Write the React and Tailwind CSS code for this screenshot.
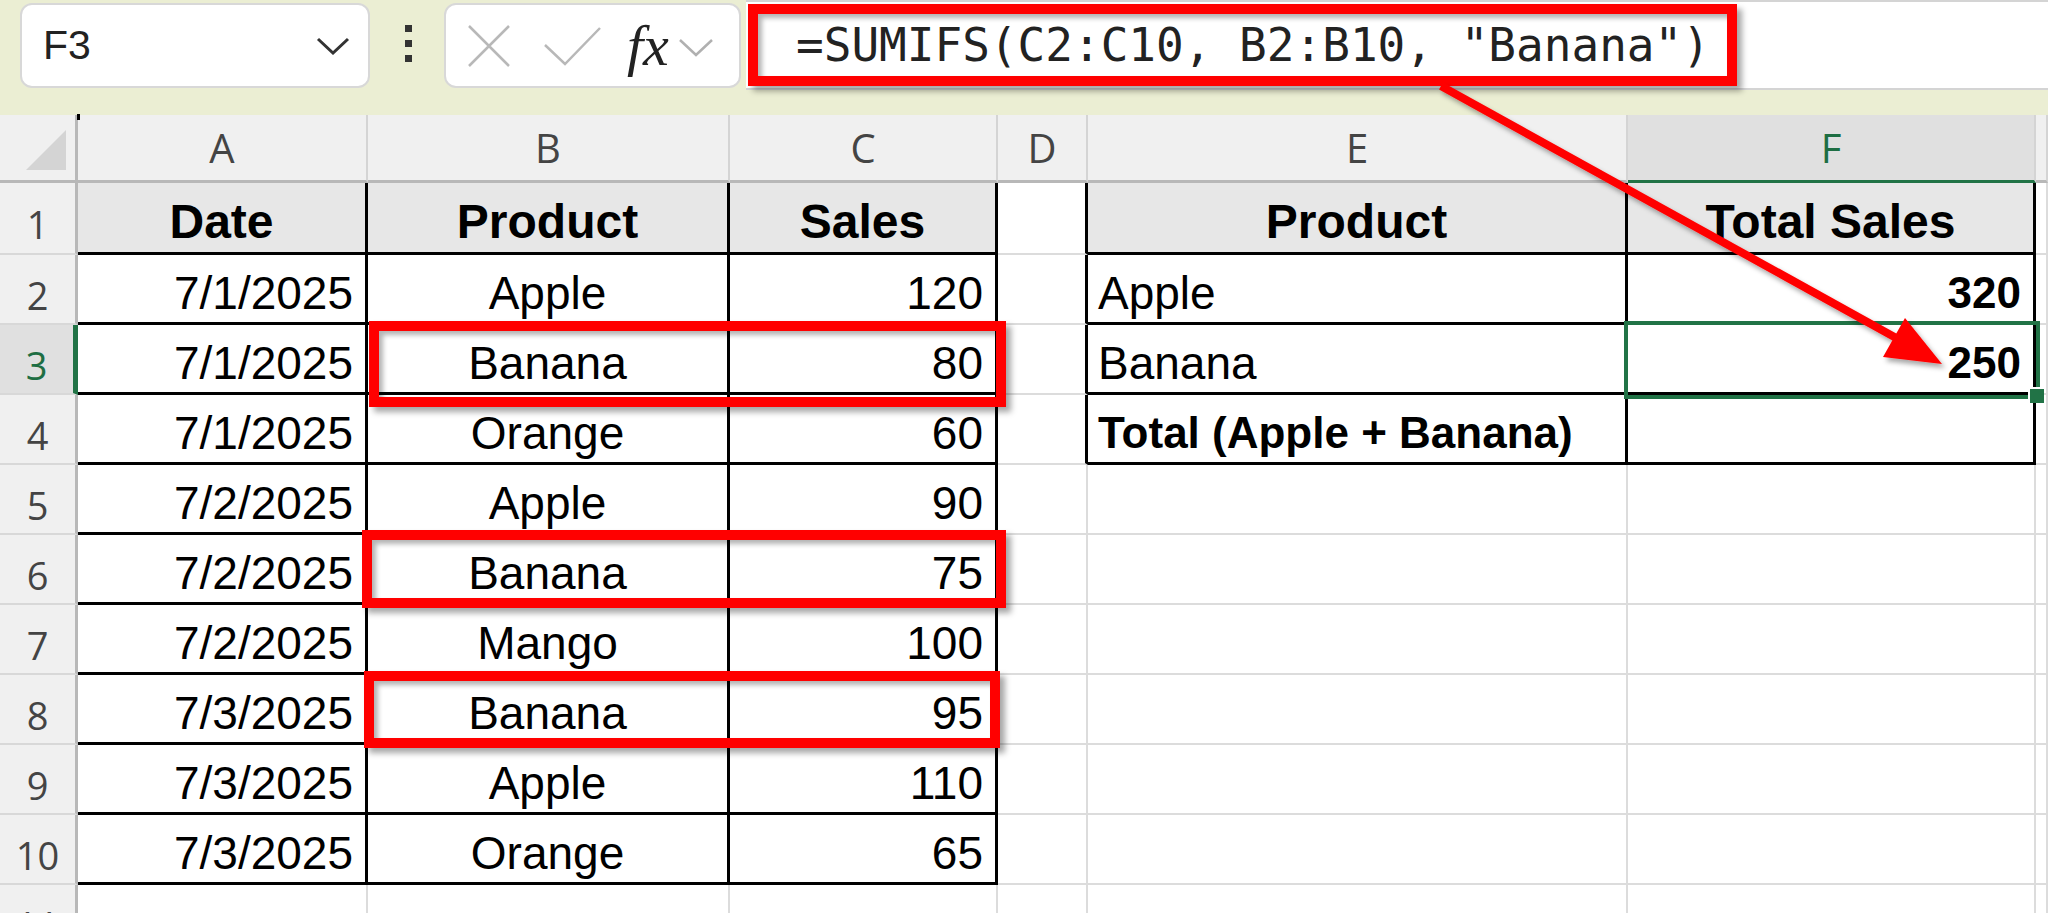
import React from "react";

const COLS = ["A", "B", "C", "D", "E", "F", "G"];

const DATA = {
  A: ["Date", "7/1/2025", "7/1/2025", "7/1/2025", "7/2/2025", "7/2/2025", "7/2/2025", "7/3/2025", "7/3/2025", "7/3/2025"],
  B: ["Product", "Apple", "Banana", "Orange", "Apple", "Banana", "Mango", "Banana", "Apple", "Orange"],
  C: ["Sales", "120", "80", "60", "90", "75", "100", "95", "110", "65"],
  E: ["Product", "Apple", "Banana", "Total (Apple + Banana)"],
  F: ["Total Sales", "320", "250", ""],
};

function rightClass(r, c) {
  if (["A", "B", "C"].includes(c) && r <= 10) return "border-r-[3px] border-r-black";
  if (["D", "E", "F"].includes(c) && r <= 4) return "border-r-[3px] border-r-black";
  return "border-r-2 border-r-[#dcdcdc]";
}

function bottomClass(r, c) {
  if (["A", "B", "C"].includes(c) && r <= 10) return "border-b-[3px] border-b-black";
  if (["E", "F"].includes(c) && r <= 4) return "border-b-[3px] border-b-black";
  return "border-b-2 border-b-[#dcdcdc]";
}

function Cell({ r, c }) {
  const isHead = r === 1 && ["A", "B", "C", "E", "F"].includes(c);
  const text = DATA[c] ? DATA[c][r - 1] : undefined;
  let align = "justify-center";
  if (!isHead) {
    if (c === "A" || c === "C" || c === "F") align = "justify-end pr-[12px]";
    else if (c === "E") align = "justify-start pl-[10px]";
  }
  let font = "text-[46px] font-normal";
  if (isHead) font = "text-[48px] font-bold";
  else if (c === "F" || (c === "E" && r === 4)) font = "text-[44px] font-bold";
  return (
    <div
      className={`flex items-center overflow-visible whitespace-nowrap pt-[8px] leading-none ${align} ${font} ${rightClass(r, c)} ${bottomClass(r, c)} ${isHead ? "bg-[#e7e7e7]" : "bg-white"}`}
    >
      {text}
    </div>
  );
}

function Toolbar() {
  return (
    <div className="flex h-[115px] items-start bg-[#ebeed3]">
      <div className="ml-[20px] mt-[3px] flex h-[85px] w-[350px] items-center justify-between rounded-[12px] border-2 border-[#d8d8d8] bg-white pl-[21px] pr-[18px]">
        <span className="text-[41px] leading-none text-[#222]">F3</span>
        <svg width="34" height="18" viewBox="0 0 34 18">
          <path d="M2 2 L17 16 L32 2" fill="none" stroke="#333" strokeWidth="3" />
        </svg>
      </div>
      <div className="ml-[35px] mt-[25px] flex flex-col gap-[8px]">
        <div className="h-[7px] w-[7px] bg-[#333]" />
        <div className="h-[7px] w-[7px] bg-[#333]" />
        <div className="h-[7px] w-[7px] bg-[#333]" />
      </div>
      <div className="ml-[32px] mt-[3px] flex h-[85px] w-[297px] items-center rounded-[12px] border-2 border-[#d8d8d8] bg-white">
        <svg className="ml-[22px]" width="42" height="42" viewBox="0 0 42 42">
          <path d="M1 1 L41 41 M41 1 L1 41" stroke="#b8b8b8" strokeWidth="2.5" fill="none" />
        </svg>
        <svg className="ml-[34px]" width="57" height="40" viewBox="0 0 57 40">
          <path d="M1 19 L21 38 L56 2" stroke="#b8b8b8" strokeWidth="2.5" fill="none" />
        </svg>
        <span className="ml-[26px] font-['Liberation_Serif',serif] text-[58px] italic leading-none text-[#222]">
          fx
        </span>
        <svg className="ml-[10px] mt-[4px]" width="34" height="18" viewBox="0 0 34 18">
          <path d="M1 1 L17 16 L33 1" fill="none" stroke="#b0b0b0" strokeWidth="2.5" />
        </svg>
      </div>
      <div className="ml-[5px] flex h-[90px] flex-1 items-center border-y-2 border-[#d4d4d4] bg-white pl-[50px] font-['DejaVu_Sans_Mono',monospace] text-[46px] leading-none text-[#222]">
        =SUMIFS(C2:C10, B2:B10, "Banana")
      </div>
    </div>
  );
}

function Sheet() {
  const rows = Array.from({ length: 11 }, (_, i) => i + 1);
  return (
    <div className="grid grid-cols-[78px_290px_362px_268px_90px_540px_408px_1fr] grid-rows-[68px_72px_repeat(10,70px)] font-['Liberation_Sans',Arial,sans-serif]">
      <div className="flex items-end justify-end border-b-[3px] border-r-[3px] border-[#b8b8b8] bg-[#f0f0f0] pb-[10px] pr-[9px]">
        <svg width="40" height="40" viewBox="0 0 40 40">
          <polygon points="40,0 40,40 0,40" fill="#d4d4d4" />
        </svg>
      </div>
      {COLS.map((c) =>
        c === "F" ? (
          <div
            key={c}
            className="flex items-center justify-center border-b-[3px] border-r-2 border-b-[#217346] border-r-[#d4d4d4] bg-[#e0e0e0] font-['Open_Sans',sans-serif] text-[40px] leading-none text-[#1e6e43]"
          >
            {c}
          </div>
        ) : (
          <div
            key={c}
            className="flex items-center justify-center border-b-[3px] border-r-2 border-b-[#b8b8b8] border-r-[#d4d4d4] bg-[#f0f0f0] font-['Open_Sans',sans-serif] text-[40px] leading-none text-[#444]"
          >
            {c === "G" ? null : c}
          </div>
        )
      )}
      {rows.map((r) => (
        <React.Fragment key={r}>
          {r === 3 ? (
            <div className="flex items-center justify-center border-b-2 border-r-[5px] border-b-[#d8d8d8] border-r-[#217346] bg-[#e0e0e0] pt-[12px] font-['Open_Sans',sans-serif] text-[38px] leading-none text-[#1e6e43]">
              {r}
            </div>
          ) : (
            <div className="flex items-center justify-center border-b-2 border-r-[3px] border-b-[#d8d8d8] border-r-[#b8b8b8] bg-[#f0f0f0] pt-[12px] font-['Open_Sans',sans-serif] text-[38px] leading-none text-[#444]">
              {r}
            </div>
          )}
          {COLS.map((c) => (
            <Cell key={c} r={r} c={c} />
          ))}
        </React.Fragment>
      ))}
    </div>
  );
}

function RedBox({ className }) {
  return (
    <div
      className={`pointer-events-none absolute border-[10px] border-[#ff0000] shadow-[5px_5px_6px_rgba(0,0,0,0.35),inset_4px_4px_5px_rgba(0,0,0,0.3)] ${className}`}
    />
  );
}

function Overlays() {
  return (
    <>
      <div className="absolute left-[77px] top-[114px] h-[6px] w-[3px] bg-black" />
      <RedBox className="left-[748px] top-[4px] h-[82px] w-[989px]" />
      <RedBox className="left-[369px] top-[321px] h-[86px] w-[637px]" />
      <RedBox className="left-[362px] top-[530px] h-[78px] w-[644px]" />
      <RedBox className="left-[364px] top-[671px] h-[77px] w-[636px]" />
      <div className="pointer-events-none absolute left-[1624px] top-[321px] h-[78px] w-[416px] border-4 border-[#217346]" />
      <div className="pointer-events-none absolute left-[2028px] top-[387px] h-[16px] w-[16px] border-l-2 border-t-2 border-white bg-[#217346]" />
      <svg className="pointer-events-none absolute left-0 top-0" width="2048" height="913" viewBox="0 0 2048 913">
        <defs>
          <filter id="arrowShadow" x="-20%" y="-20%" width="140%" height="140%">
            <feDropShadow dx="3" dy="4" stdDeviation="2.5" floodColor="#000" floodOpacity="0.35" />
          </filter>
        </defs>
        <g filter="url(#arrowShadow)">
          <line x1="1441" y1="86" x2="1898" y2="339" stroke="#ff0000" strokeWidth="8" />
          <polygon points="1942,364 1883,357 1905,318" fill="#ff0000" />
        </g>
      </svg>
    </>
  );
}

export default function App() {
  return (
    <div className="relative h-[913px] w-[2048px] overflow-hidden bg-white font-['Liberation_Sans',Arial,sans-serif] text-black">
      <Toolbar />
      <Sheet />
      <Overlays />
    </div>
  );
}
